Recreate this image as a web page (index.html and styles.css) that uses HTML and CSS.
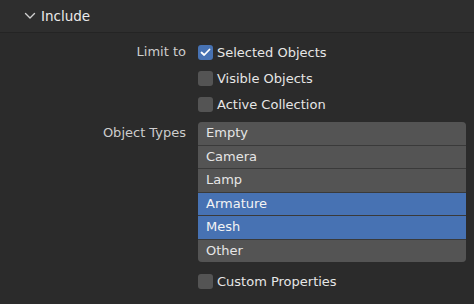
FILE: index.html
```html
<!DOCTYPE html>
<html lang="en">
<head>
    <meta charset="UTF-8">
    <title>Include</title>
    <link rel="stylesheet" href="styles.css">
</head>
<body>
    <div class="panel">
        <div class="panel-header">
            <svg class="chevron" width="12" height="8" viewBox="0 0 12 8">
                <path d="M1.5 1.5 L6 6 L10.5 1.5" fill="none" stroke="#cfcfcf" stroke-width="1.4" stroke-linecap="round" stroke-linejoin="round"/>
            </svg>
            <span>Include</span>
        </div>
        <div class="panel-body">
            <div class="prop-row">
                <div class="prop-label">Limit to</div>
                <div class="prop-value">
                    <label class="check"><span class="box checked"><svg width="11" height="9" viewBox="0 0 11 9"><path d="M1.5 4.5 L4.2 7 L9.5 1.5" fill="none" stroke="#fff" stroke-width="1.8" stroke-linecap="round" stroke-linejoin="round"/></svg></span>Selected Objects</label>
                    <label class="check"><span class="box"></span>Visible Objects</label>
                    <label class="check"><span class="box"></span>Active Collection</label>
                </div>
            </div>
            <div class="prop-row types">
                <div class="prop-label">Object Types</div>
                <div class="prop-value">
                    <div class="list">
                        <div class="item">Empty</div>
                        <div class="item">Camera</div>
                        <div class="item">Lamp</div>
                        <div class="item selected">Armature</div>
                        <div class="item selected">Mesh</div>
                        <div class="item">Other</div>
                    </div>
                </div>
            </div>
            <div class="prop-row">
                <div class="prop-label"></div>
                <div class="prop-value">
                    <label class="check"><span class="box"></span>Custom Properties</label>
                </div>
            </div>
        </div>
    </div>
</body>
</html>
```

FILE: styles.css
```css
body {
    margin: 0;
    background-color: #2b2b2b;
    font-family: "DejaVu Sans", sans-serif;
    font-size: 13px;
    color: #e6e6e6;
}
.panel {
    width: 474px;
    height: 304px;
    overflow: hidden;
}
.panel-header {
    height: 32px;
    display: flex;
    align-items: center;
    padding-left: 24px;
    background-color: #2e2e2e;
    border-bottom: 1px solid #242424;
    font-size: 13.5px;
    color: #ebebeb;
}
.chevron {
    margin-right: 5px;
}
.panel-body {
    padding: 6px 8px 0 0;
}
.prop-row {
    display: grid;
    grid-template-columns: 186px 1fr;
    column-gap: 12px;
}
.prop-label {
    text-align: right;
    color: #cdcdcd;
    line-height: 26px;
}
.types {
    margin: 5px 0 6px;
}
.types .prop-label {
    line-height: 22px;
}
.check {
    display: flex;
    align-items: center;
    height: 26px;
}
.box {
    width: 15px;
    height: 15px;
    border-radius: 3px;
    background-color: #545454;
    margin-right: 4px;
    display: flex;
    align-items: center;
    justify-content: center;
}
.box.checked {
    background-color: #4772b3;
}
.list {
    border-radius: 4px;
    overflow: hidden;
    background-color: #3a3a3a;
    display: flex;
    flex-direction: column;
    gap: 1px;
}
.item {
    height: 22.5px;
    line-height: 22px;
    padding-left: 8px;
    background-color: #545454;
    color: #e6e6e6;
}
.item.selected {
    background-color: #4772b3;
    color: #f4f4f4;
}
```
